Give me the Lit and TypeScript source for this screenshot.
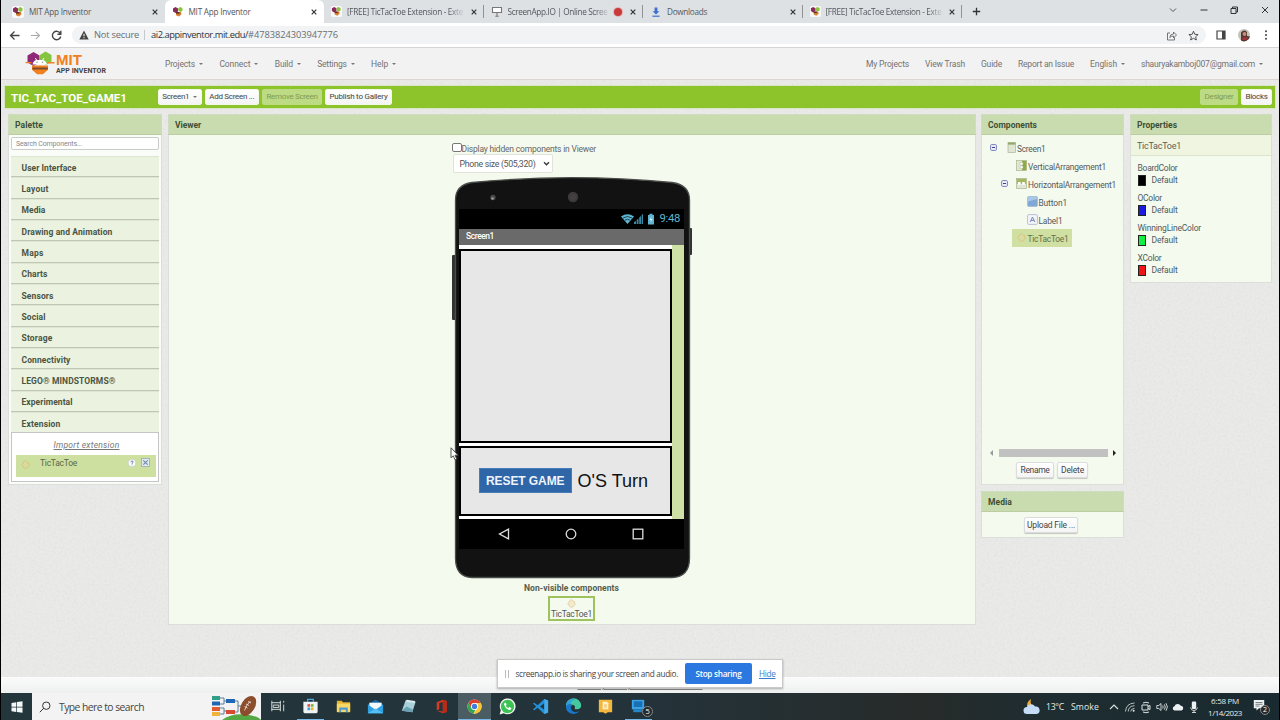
import { LitElement, html, css, nothing } from "lit";
import { customElement, property } from "lit/decorators.js";

/* A run of text set to an exact width by adjusting its tracking. */
@customElement("fit-text")
class FitText extends LitElement {
  @property({ type: Number }) w = 0;
  static styles = css`
    :host { display: inline-block; white-space: pre; flex: none; }
  `;
  firstUpdated() {
    const n = (this.textContent || "").length;
    const natural = this.getBoundingClientRect().width;
    this.style.letterSpacing = (this.w - natural) / Math.max(1, n) + "px";
    this.style.width = this.w + "px";
  }
  render() { return html`<slot></slot>`; }
}

const t = (s: string, w: number, cls = "") => html`<fit-text class=${cls} .w=${w}>${s}</fit-text>`;

const beeIcon = html`<svg class="fav" viewBox="0 0 12 12">
  <rect width="12" height="12" rx="2" fill="#fff" opacity=".75"/>
  <path d="M1 2.5 3.5 1 6 2.5v3L3.5 7 1 5.5z" fill="#8b2a5b"/>
  <path d="M6.3 2 8.3 1l2.2 1.2v2.6L8.5 6 6.3 4.8z" fill="#8dc43f"/>
  <path d="M4 6.5 8.8 6l.7 2.2L7 10.6 4 9.3z" fill="#d97b2c"/>
  <path d="M4 6h3.5v1.6H4z" fill="#5c2d23"/></svg>`;
const screenIcon = html`<svg class="fav" viewBox="0 0 12 12"><path d="M1.5 1.5h9v5h-9zM6 6.5V10M4.3 10.3h3.4" fill="#fff" stroke="#777" stroke-width="1.1"/></svg>`;
const downIcon = html`<svg class="fav" viewBox="0 0 12 12"><path d="M4.6 1.5h2.8v3.7h2L6 8.6 2.6 5.2h2z" fill="#3c6fd0"/><path d="M2.4 9.6h7.2v1.2H2.4z" fill="#3c6fd0"/></svg>`;
const closeX = html`<svg class="close" viewBox="0 0 8 8"><path d="M1.7 1.7l4.6 4.6M6.3 1.7L1.7 6.3" stroke="#333" stroke-width="1.2"/></svg>`;

const tabs = [
  { icon: beeIcon, text: "MIT App Inventor", w: 62 },
  { icon: beeIcon, text: "MIT App Inventor", w: 62, active: true },
  { icon: beeIcon, text: "[FREE] TicTacToe Extension - Exte", w: 116, fade: true, tight: true },
  { icon: screenIcon, text: "ScreenApp.IO | Online Scree", w: 100, fade: true, rec: true },
  { icon: downIcon, text: "Downloads", w: 40 },
  { icon: beeIcon, text: "[FREE] TicTacToe Extension - Exte", w: 116, fade: true, tight: true },
];

const palette: [string, number][] = [
  ["User Interface", 55], ["Layout", 27], ["Media", 24], ["Drawing and Animation", 91], ["Maps", 22],
  ["Charts", 26], ["Sensors", 32], ["Social", 24], ["Storage", 31], ["Connectivity", 49],
  ["LEGO® MINDSTORMS®", 94], ["Experimental", 51], ["Extension", 39],
];

const minus = html`<svg class="minus" viewBox="0 0 7 7"><rect x=".6" y=".6" width="5.8" height="5.8" rx="1" fill="#eef0fb" stroke="#7a80b8"/><path d="M2 3.5h3" stroke="#3b4296"/></svg>`;
const icScreen = html`<svg class="ti" viewBox="0 0 11 11"><rect x="2" y=".6" width="7.4" height="9.8" fill="#dfe5d3" stroke="#a9b598" stroke-width=".7"/><rect x="2" y=".6" width="7.4" height="2" fill="#93a86a"/></svg>`;
const icVert = html`<svg class="ti" viewBox="0 0 11 11"><rect x=".5" y=".5" width="10" height="10" fill="#dfe6d6" stroke="#a9b58f" stroke-width=".7"/><rect x="6" y=".8" width="4.3" height="9.4" fill="#8fa848"/><path d="M4 2.5h3v2.4H4zM4 6h3v2.4H4z" fill="#fff" stroke="#9db07a" stroke-width=".4"/></svg>`;
const icHorz = html`<svg class="ti" viewBox="0 0 11 11"><rect x=".5" y=".5" width="10" height="10" fill="#dfe6d6" stroke="#a9b58f" stroke-width=".7"/><rect x=".8" y=".8" width="9.4" height="5" fill="#a3b763"/><path d="M2 4h2.600v2.800H2zM6.200 4h2.600v2.800H6.200z" fill="#fff"/></svg>`;
const icButton = html`<svg class="ti" viewBox="0 0 11 11"><rect x=".6" y=".6" width="9.8" height="9.8" rx=".8" fill="#7fa8d6" stroke="#a2b8d2" stroke-width=".8"/><path d="M1 1h9v2L1 5.500z" fill="#a9c8e8"/></svg>`;
const icLabel = html`<svg class="ti" viewBox="0 0 11 11"><rect x=".6" y=".6" width="9.8" height="9.8" rx="1" fill="#f3f5fb" stroke="#aab4cc" stroke-width=".8"/><path d="M3.2 8 5.500 3 7.800 8M4 6.400h3" fill="none" stroke="#7a86b4" stroke-width="1"/></svg>`;
const icExt = html`<svg class="ti" viewBox="0 0 11 11"><path d="M5.500 1.500 7 3l1.500.5-.2 1.500L9.500 6 8 7.300 7.500 8.500 5.500 9.500 3.500 8.300 3 7 1.500 5.700 3 4.500l.3-1.400z" fill="#e5d79a" fill-opacity=".4" stroke="#dca862" stroke-opacity=".55" stroke-width=".8"/></svg>`;

const props = [
  { n: "BoardColor", w: 40, c: "#000" }, { n: "OColor", w: 24.5, c: "#1c1ce0" },
  { n: "WinningLineColor", w: 63.5, c: "#10f040" }, { n: "XColor", w: 24, c: "#f01414" },
];

const dot = html`<i class="caret"></i>`;

const apps = [
  { svg: html`<svg viewBox="0 0 20 20"><path d="M4 4v11M13 4v11M4 6h9M4 13h9M16.500 4v2M16.500 8v7" stroke="#d8dddd" fill="none"/><path d="M5.500 8.500h6v2.500h-6z" fill="none" stroke="#d8dddd"/></svg>` },
  { svg: html`<svg viewBox="0 0 20 20"><path d="M7 5V2.500h6V5" fill="none" stroke="#4ba8e0" stroke-width="1.300"/><path d="M2.500 5h15v10.500q0 1.500-1.500 1.500H4q-1.500 0-1.500-1.500z" fill="#eef3f6"/><path d="M6.800 7.500h2.800v2.800H6.800z" fill="#e0533a"/><path d="M10.400 7.500h2.800v2.800h-2.800z" fill="#7cb83e"/><path d="M6.800 11.100h2.800v2.800H6.800z" fill="#37a0e0"/><path d="M10.400 11.100h2.800v2.800h-2.800z" fill="#f1b420"/></svg>`, open: true },
  { svg: html`<svg viewBox="0 0 20 20"><path d="M3 4h5l1.500 1.500H17V15H3z" fill="#e8b330"/><path d="M3 7h14v9H3z" fill="#f8d765"/><path d="M5.500 11h9v5h-2v-2.500h-5V16h-2z" fill="#4f9bd5"/></svg>` },
  { svg: html`<svg viewBox="0 0 20 20"><path d="M2 8 10 2.500 18 8v9H2z" fill="#1367a8"/><path d="M3.500 6h13v7h-13z" fill="#f4f8fa"/><path d="M2 8l8 5.500L18 8v9H2z" fill="#2ea0e4"/><path d="M2 17l8-5 8 5z" fill="#57bff2"/></svg>` },
  { svg: html`<svg viewBox="0 0 20 20"><path d="M7 3.500l10.500 1.500L14 16 3 14.500z" fill="#a9cfda"/><path d="M8 3l9 1.300-.6 2L7.400 5z" fill="#dcebef"/><path d="M3 14.500 14 16l.8-2.500L8 10z" fill="#6aa2b3"/></svg>` },
  { svg: html`<svg viewBox="0 0 20 20"><path d="M5 5.500 11.500 3l4 1.200v11.600l-4 1.200L5 14.600l6.300.7V5.300L7.700 6.200v6.600L5 14z" fill="#d93a20"/><path d="M11.500 3l4 1.200v11.600l-4 1.200z" fill="#b72918"/></svg>` },
  { svg: html`<svg viewBox="0 0 20 20"><circle cx="10" cy="10" r="7.500" fill="#e8e8e8"/><path d="M3.500 6.300A7.500 7.500 0 0 1 16.500 6.300H10A3.700 3.700 0 0 0 6.700 11.800z" fill="#df4130"/><path d="M3.500 6.300 6.800 11.900A3.700 3.700 0 0 0 10.800 13.600L9 17.400A7.500 7.500 0 0 1 3.500 6.300z" fill="#36a550"/><path d="M16.500 6.300A7.500 7.500 0 0 1 9 17.400l4.300-5.600A3.700 3.700 0 0 0 12 6.300z" fill="#f8c62e"/><circle cx="10" cy="10" r="3.600" fill="#fff"/><circle cx="10" cy="10" r="2.800" fill="#3f7de0"/></svg>`, open: true, active: true },
  { svg: html`<svg viewBox="0 0 20 20"><path d="M1.700 18.300 3 14A8.300 8.300 0 1 1 6 17z" fill="#f4f8f4"/><circle cx="10" cy="10" r="7" fill="#3dc254"/><path d="M7.200 6q-1.200.8-.7 2.500.9 3.500 4.600 5 2 .6 2.700-.9l.1-1-1.900-1-1.200 1.100Q8.900 11 8.300 9.300L9 8.200 8.300 6z" fill="#fff"/></svg>` },
  { svg: html`<svg viewBox="0 0 20 20"><path d="M14 2l4 1.800v12.400L14 18 7 11.300 3.400 14 2 13.200l3.500-3.200L2 6.800 3.400 6 7 8.700zM14 6.500 9.500 10l4.500 3.500z" fill="#2391d9" fill-rule="evenodd"/><path d="M14 2l4 1.800v12.400L14 18z" fill="#45a9ea"/></svg>` },
  { svg: html`<svg viewBox="0 0 20 20"><path d="M2 9.500A8 8 0 0 1 18 9q0 4-4.500 4-3 0-2-2 .7-1.500-1.500-2.500-4-1.500-8 1z" fill="#45c9a0"/><path d="M2 9.500A8 8 0 0 1 12 2.300Q6 4 7.600 7 3.600 7.500 2 9.500z" fill="#2f9fe0"/><path d="M2 10Q4 6 9 8.500 5.500 11 8.500 14.500q3 2.800 7.800.3A8 8 0 0 1 2 10z" fill="#1978cc"/></svg>` },
  { svg: html`<svg viewBox="0 0 20 20"><path d="M3 3h14v13h-4.500L10 17.500 7.500 16H3z" fill="#f4b63c"/><path d="M7 5h4.500L13 6.500V13H7z" fill="#fff1c9"/><path d="M8.500 8.500h3M8.500 10.500h3" stroke="#e1a22f" stroke-width=".8"/></svg>` },
  { svg: html`<svg viewBox="0 0 20 20"><path d="M3 3h13v10H3z" fill="#3ba3e4"/><path d="M5 4.500h9v6H5z" fill="#1970b4"/><path d="M4.500 13h9v3h-9z" fill="#2487cc"/></svg>`, open: true, badge: "5" },
];

@customElement("app-root")
class AppRoot extends LitElement {
  static styles = css`
    :host { display: block; }
    * { box-sizing: border-box; }
    svg { display: block; flex: none; overflow: visible; }
    .root { position: relative; width: 1280px; height: 720px; overflow: hidden; background: #eaeae9; border-left: 1px solid #000; border-right: 1px solid #000; display: flex; flex-direction: column; font: 8.500px/12px Roboto, sans-serif; color: #555; }
    .grain { position: absolute; left: 0; top: 80px; width: 1278px; height: 598px; }
    .tabs { height: 23px; background: #dde1e4; display: flex; padding-left: 4px; flex: none; font: 8.2px/12px "Open Sans", sans-serif; color: #54585c; position: relative; }
    .tab { width: 159.500px; height: 23px; display: flex; align-items: center; padding: 0 6px 0 7px; position: relative; }
    .tab.sep::after { content: ""; position: absolute; right: 0; top: 5px; height: 13px; width: 1px; background: #8f9396; }
    .tab.active { background: #fff; border-radius: 6px 6px 0 0; }
    .fav { width: 12px; height: 12px; margin-right: 5px; }
    .tight .fav { width: 11px; height: 11px; }
    .fade { -webkit-mask-image: linear-gradient(90deg, #000 88%, transparent 102%); }
    .close { width: 8px; height: 8px; margin-left: auto; }
    .rec { width: 8px; height: 8px; border-radius: 50%; background: #c93a3a; box-shadow: 0 0 0 1px #e4b2b2; margin-left: 6px; }
    .plus { width: 9px; height: 9px; margin: 7px 0 0 10px; }
    .winctl { margin-left: auto; height: 19px; width: 121px; padding-right: 9px; padding-left: 10px; display: flex; align-items: center; justify-content: space-between; }
    .winctl svg { width: 10px; height: 10px; }
    .toolbar { height: 24px; flex: none; background: #fff; display: flex; align-items: center; padding-left: 8px; position: relative; }
    .navi { width: 11px; height: 11px; margin-right: 10px; }
    .omni { width: 1134px; height: 18px; border-radius: 9px; background: #f1f3f4; display: flex; align-items: center; padding: 0 7px; font: 9.300px/14px "Open Sans", sans-serif; color: #6a6e72; }
    .omni .dark { color: #2f3337; }
    .warn { width: 10px; height: 10px; margin-right: 5px; }
    .bar { width: 1px; height: 10px; background: #c6c9cc; margin: 0 6px 0 5px; }
    .omr { margin-left: auto; display: flex; gap: 11px; }
    .omr svg { width: 11px; height: 11px; }
    .tr { display: flex; align-items: center; flex: 1; padding: 0 7px 0 9px; justify-content: space-between; }
    .tr svg { width: 12px; height: 12px; }
    .head { height: 33px; flex: none; background: #f2f2f2; border-top: 1px solid #d4d4d4; border-bottom: 1px solid #dcd6d2; display: flex; align-items: center; position: relative; color: #727272; }
    .logo { display: flex; margin-left: 24px; width: 140px; align-items: center; }
    .logo svg { width: 30px; height: 24px; margin-top: -2px; }
    .lt { margin-left: 1px; display: flex; flex-direction: column; }
    .mit { font: bold 15px/12px "Liberation Sans", sans-serif; color: #f08020; margin-top: 1px; }
    .ai { font: bold 7px/8px Roboto, sans-serif; color: #444; margin-top: 1px; }
    .menu { display: flex; align-items: center; }
    .menu .m { display: flex; align-items: center; }
    .left { gap: 16.400px; }
    .right { gap: 16px; margin-left: auto; margin-right: 16px; }
    .caret { display: inline-block; border: 2px solid transparent; border-top-color: #777; border-bottom: 0; margin-left: 4px; flex: none; }
    .green { height: 22px; flex: none; margin: 6px 4px 0 4px; background: #8dc42b; display: flex; align-items: center; padding-left: 6px; position: relative; outline: 1px solid rgba(205,229,170,.6); }
    .title { font: bold 11.500px/14px Roboto, sans-serif; color: #fff; margin-top: 2px; margin-right: 31px; }
    .btn { height: 16px; background: linear-gradient(#fff, #f4f4f4); border-radius: 2px; display: flex; align-items: center; justify-content: center; font-size: 8px; color: #444; border: 1px solid #e2e8da; margin-right: 3px; flex: none; }
    .green .btn { border-color: #f3f8e8; }
    .green .btn.off { background: #bddb84; color: #7f9c52; border-color: #bddb84; }
    .w43 { width: 43.500px; } .w55 { width: 54.500px; } .w60 { width: 60px; } .w67 { width: 67px; } .w38 { width: 38px; } .w31 { width: 31px; }
    .grow { flex: 1; }
    .main { flex: 1; display: flex; align-items: flex-start; padding: 6px 0 0 7px; position: relative; }
    .panel { background: #f4faee; border: 1px solid #dcdedc; border-top: 0; flex: none; }
    .ph { height: 21px; margin: 0 -1px; background: #c9dcb0; border: 1px solid #cfdcc0; border-bottom-color: #bccda4; padding: 5px 6px 0; font-weight: bold; color: #3f4f35; line-height: 10px; }
    .pal { width: 154px; height: 371px; margin-right: 6px; }
    .pal .in { padding: 2px 2px 0; background: #fafcf8; height: 349px; }
    .search { height: 13px; border: 1px solid #c9cdc9; border-radius: 2px; background: #fff; display: flex; align-items: center; padding-left: 4px; font-size: 7px; color: #888; margin-bottom: 6px; }
    .cat { height: 21.350px; background: #ebf2e0; border-top: 1px solid #dde6d0; border-bottom: 1px solid #bfc6b8; padding: 4.500px 0 0 10.500px; font-weight: bold; color: #4a5544; line-height: 12px; }
    .ext { height: 50px; border: 1px solid #c5c5c8; background: #fff; padding: 5.500px 3px 0 5px; display: flex; flex-direction: column; align-items: center; margin-top: -1px; }
    .imp { font-style: italic; color: #777; margin-left: 1px; }
    .imp fit-text, .hide fit-text, .foot fit-text { text-decoration: underline; }
    .exti { margin-top: 4px; height: 22px; width: 140px; background: #cde09f; display: flex; align-items: flex-start; padding: 2px 6px 0 4px; color: #5b6848; }
    .exti .ti { margin-top: 2px; }
    .exti fit-text { margin-left: 9px; }
    .qi { width: 8px; height: 8px; margin: 2px 5px 0 auto; } .xi { width: 9px; height: 9px; margin-top: 1.500px; }
    .view { width: 808px; height: 511px; margin-right: 5px; }
    .vin { padding: 8px 0 0 283px; }
    .chk { display: flex; height: 12px; align-items: center; color: #666; }
    .cb { width: 9.500px; height: 9.500px; border: 1px solid #777; border-radius: 2px; background: #fff; margin: -3px 0 0 0; }
    .sel { width: 100px; height: 19px; border: 1px solid #dfe3d8; border-radius: 2px; background: #fff; margin: -1px 0 0 .5px; display: flex; align-items: center; padding: 0 2px 0 6px; justify-content: space-between; font-size: 8.800px; color: #555; }
    .sel svg { width: 7px; height: 7px; }
    .phone { position: relative; width: 240px; height: 401px; margin-top: 4px; padding: 32px 0 0 7px; }
    .shell { position: absolute; left: 0; top: 0; width: 240px; height: 401px; }
    .scr { position: relative; width: 225px; }
    .stat { height: 20px; background: #000; display: flex; justify-content: flex-end; align-items: center; padding-right: 4px; color: #5fb4d2; font-size: 11.300px; }
    .stat svg { width: 35px; height: 12px; margin-right: 4px; }
    .stitle { height: 16px; background: #6a6a6a; color: #fff; padding: 1.500px 0 0 7px; line-height: 11px; font-weight: 500; }
    .sbody { height: 274px; background: #cfe0a6; display: flex; }
    .scol { width: 213px; background: #fff; padding-top: 3.500px; display: flex; flex-direction: column; gap: 3px; }
    .box { border: 2px solid #000; background: #e7e7e7; height: 194.500px; }
    .box.b2 { height: 70px; display: flex; align-items: center; padding: 0 0 0 17.500px; font-family: "Liberation Sans", sans-serif; }
    .reset { width: 93.500px; height: 25px; background: #2f66a8; color: #eef4fa; font-weight: bold; font-size: 12px; display: flex; align-items: center; justify-content: center; margin-right: 5.500px; margin-top: -1px; border: 1px solid #477cb8; }
    .turn { font-size: 18px; color: #111; line-height: 22px; }
    .nav { height: 30px; background: #000; display: flex; align-items: center; justify-content: space-between; padding: 0 40px 0 39px; }
    .nav svg { width: 12px; height: 12px; }
    .nonvis { width: 239px; display: flex; flex-direction: column; align-items: center; font-weight: bold; color: #55604f; padding-top: 4px; }
    .nv { width: 47px; height: 25px; margin-top: 2px; border: 2px solid #9ec25e; font-weight: normal; display: flex; flex-direction: column; align-items: center; color: #555; line-height: 10px; }
    .nv .ti { height: 11px; }
    .c3 { display: flex; flex-direction: column; gap: 6px; margin-right: 6px; }
    .comp { width: 143px; height: 371px; display: flex; flex-direction: column; }
    .tree { padding: 3.500px 0 0 8px; height: 313px; color: #55595c; flex: none; font-size: 8.400px; }
    .row { height: 18px; display: flex; align-items: center; }
    .row fit-text { margin-top: 2.500px; margin-left: 1px; }
    .row .ti { margin-top: -1px; }
    .minus { width: 7px; height: 7px; margin-right: 8px; margin-top: -1px; }
    .ti { width: 11px; height: 11px; }
    .l1 { padding-left: 26px; } .l1m { padding-left: 11px; } .l2 { padding-left: 36.500px; }
    .row0 .ti { margin-left: .5px; }
    .row0 fit-text { margin-left: .5px; }
    .selrow { margin-left: 21.500px; width: 60px; height: 18px; background: #cfe0a2; padding-left: 4px; color: #667048; }
    .selrow fit-text { margin-top: 2.500px; }
    .hs { display: flex; align-items: center; height: 9px; padding: 0 7px 0 8px; justify-content: space-between; flex: none; }
    .thumb { width: 109px; height: 8px; background: #c1c1c1; }
    .la { border: 3px solid transparent; border-right-color: #999; border-left: 0; } .ra { border: 3px solid transparent; border-left-color: #222; border-right: 0; }
    .btns { display: flex; justify-content: center; padding-top: 5px; }
    .btns .btn { border: 1px solid #dcdcdc; box-shadow: 0 1px 1px #c2c6be; font-size: 8.500px; }
    .comp .btns { padding-left: 2px; }
    .media { width: 143px; height: 47px; }
    .prop { width: 142px; height: 169px; }
    .sub { height: 21px; background: #eff5e0; border-bottom: 1px solid #dce5cc; padding: 5px 0 0 6px; color: #5b6156; font-size: 9px; }
    .pi { padding: 6px 0 0 6.500px; height: 30px; color: #4e5a60; }
    .pr { display: flex; align-items: center; gap: 6px; }
    .sw { width: 8px; height: 11px; border: 1px solid #222; margin-top: 1px; }
    .foot { height: 16px; flex: none; background: linear-gradient(#fbfbfb, #eef0f0); position: relative; text-align: center; color: #888; line-height: 16px; font-size: 8.500px; }
    .share { position: absolute; left: 496px; top: 659px; width: 286px; height: 29px; background: #fff; border: 1px solid #c9c9c9; box-shadow: 0 1px 2px rgba(0,0,0,.3); display: flex; align-items: center; padding-left: 7px; font: 8.200px/12px "Open Sans", sans-serif; color: #444; }
    .handle { width: 4px; height: 8px; border: 1px solid #bbb; border-width: 0 1px; margin-right: 6.500px; }
    .stop { margin: 0 7px 0 7px; width: 67px; height: 21px; background: #2b78e0; border-radius: 2px; color: #fff; font-weight: 600; display: flex; align-items: center; justify-content: center; }
    .hide { color: #3e7bc8; }
    .cursor { position: absolute; left: 449px; top: 447px; width: 9px; height: 14px; }
    .task { height: 27px; flex: none; background: linear-gradient(90deg, #22363c, #24333a 50%, #272b2a 72%, #1e2d31 82%, #192a30); position: relative; display: flex; color: #e6ebeb; font: 8.700px/12px "Open Sans", sans-serif; }
    .start { width: 31px; display: flex; align-items: center; justify-content: center; }
    .start svg { width: 12px; height: 12px; }
    .tsearch { width: 229px; background: #f3f3f3; color: #444; display: flex; align-items: center; padding-left: 7px; font-size: 10.300px; }
    .tsearch .mag { width: 12px; height: 12px; margin-right: 8px; }
    .art { width: 50px; height: 27px; margin-left: auto; }
    .app { width: 32.850px; height: 27px; display: flex; align-items: center; justify-content: center; position: relative; }
    .app svg { width: 19px; height: 19px; }
    .app.active { background: #4b5c62; }
    .app.open::after { content: ""; position: absolute; left: 3px; right: 3px; bottom: 0; height: 1.500px; background: #76b9e8; }
    .app.active::after { left: 0; right: 0; }
    .badge { position: absolute; right: 2px; bottom: 3px; width: 11px; height: 11px; border-radius: 50%; background: #26292b; border: 1px solid #888; color: #fff; font-size: 7.500px; line-height: 9px; text-align: center; }
    .tray { margin-left: auto; display: flex; align-items: center; padding-right: 8px; }
    .tray .wx { width: 17px; height: 17px; margin-right: 6px; }
    .tray .ic { width: 12px; height: 12px; margin-left: 4px; }
    .clock { display: flex; flex-direction: column; align-items: center; margin: 0 11px 0 8px; font-size: 8px; }
    .smoke { margin: 0 5px 0 7px; }
    .note { position: relative; width: 18px; height: 18px; }
    .note svg { width: 12px; height: 12px; margin-top: 1px; }
    .note .badge { right: 1px; bottom: 1px; width: 10px; height: 10px; line-height: 8px; font-size: 7px; }
  `;

  tab(x: any, i: number) {
    return html`<div class="tab ${x.active ? "active" : ""} ${x.tight ? "tight" : ""} ${i > 1 ? "sep" : ""}">
      ${x.icon}${t(x.text, x.w, x.fade ? "fade" : "")}${x.rec ? html`<i class="rec"></i>` : nothing}${closeX}</div>`;
  }

  menu(s: string, w: number, caret = true) {
    return html`<span class="m">${t(s, w)}${caret ? dot : nothing}</span>`;
  }

  render() {
    return html`<div class="root">
      <svg class="grain"><filter id="n" x="0" y="0" width="100%" height="100%"><feTurbulence type="fractalNoise" baseFrequency=".45" numOctaves="2" seed="4"/><feColorMatrix values="0 0 0 0 .45  0 0 0 0 .45  0 0 0 0 .45  .5 0 0 0 -.18"/></filter><rect width="1278" height="598" filter="url(#n)" opacity=".45"/></svg>
      <div class="tabs">
        ${tabs.map((x, i) => this.tab(x, i))}
        <svg class="plus" viewBox="0 0 9 9"><path d="M4.500.8v7.400M.8 4.500h7.400" stroke="#333" stroke-width="1.300"/></svg>
        <div class="winctl">
          <svg viewBox="0 0 10 10"><path d="M2 3.500 5 6.500 8 3.500" fill="none" stroke="#555"/></svg>
          <svg viewBox="0 0 10 10"><path d="M1.500 5h7" stroke="#333"/></svg>
          <svg viewBox="0 0 10 10"><path d="M2 3.500h5v5H2zM3.500 3.500V2h5v5H7" fill="none" stroke="#333"/></svg>
          <svg viewBox="0 0 10 10"><path d="M2 2l6 6M8 2 2 8" stroke="#333"/></svg>
        </div>
      </div>
      <div class="toolbar">
        <svg class="navi" viewBox="0 0 11 11"><path d="M10.500 5.500H1.500M5.500 1.500l-4 4 4 4" fill="none" stroke="#444" stroke-width="1.300"/></svg>
        <svg class="navi" viewBox="0 0 11 11"><path d="M1 5.500h8.500M5.800 1.800l3.700 3.700-3.700 3.700" fill="none" stroke="#aaa" stroke-width="1.100"/></svg>
        <svg class="navi" viewBox="0 0 11 11"><path d="M9.300 3.500A4.200 4.200 0 1 0 9.700 6.500M9.800.8v3.400H6.400" fill="none" stroke="#444" stroke-width="1.400"/></svg>
        <div class="omni">
          <svg class="warn" viewBox="0 0 10 10"><path d="M5 .6 9.700 9.400H.3z" fill="#444"/><path d="M5 3.800v2.600M5 7.200v1.100" stroke="#fff" stroke-width="1"/></svg>
          ${t("Not secure", 45)}<i class="bar"></i>${t("ai2.appinventor.mit.edu/", 97, "dark")}${t("#4783824303947776", 90)}
          <div class="omr">
            <svg viewBox="0 0 11 11"><path d="M4 3H1.500v7h7V7.500M3.800 7.500Q4 4 7.500 4V2l3 3-3 3V6Q5 6 3.800 7.500z" fill="none" stroke="#666" stroke-width=".9"/></svg>
            <svg viewBox="0 0 11 11"><path d="M5.500 1.200 6.800 4.300l3.300.3-2.500 2.200.8 3.200-2.900-1.700L2.600 10l.8-3.200L.9 4.600l3.300-.3z" fill="none" stroke="#444" stroke-width=".9"/></svg>
          </div>
        </div>
        <div class="tr">
          <svg viewBox="0 0 12 12"><path d="M2 2h8v8H2z" fill="none" stroke="#444" stroke-width="1.200"/><path d="M7 2h3v8H7z" fill="#444"/></svg>
          <svg viewBox="0 0 12 12"><circle cx="6" cy="6" r="6" fill="#c3c3bb"/><path d="M3 3.500Q6 0 9 3v4l3 .5A6 6 0 0 1 3 11.500z" fill="#543a34"/><circle cx="6.500" cy="5" r="1.900" fill="#c68e74"/><path d="M5 8l5 .5-1.500 2.500H4z" fill="#9c3439"/></svg>
          <svg viewBox="0 0 12 12"><circle cx="6" cy="2.300" r="1" fill="#444"/><circle cx="6" cy="6" r="1" fill="#444"/><circle cx="6" cy="9.700" r="1" fill="#444"/></svg>
        </div>
      </div>
      <div class="head">
        <div class="logo">
          <svg viewBox="0 0 29 24"><path d="M2 4.500 8 1l6 3.500v7L8 15l-6-3.500z" fill="#8e2877"/><path d="M14.500 4 20 .5 26 4v6.500L20.500 14l-6-3.500z" fill="#86c440"/><path d="M0 11h6v1.300H0zM22 11h7v1.500h-7z" fill="#f08020"/><path d="M9.800 7l1.500 2.300M18.500 7l-1.500 2.300" stroke="#fff"/><path d="M10.500 9h7q3.500 1 4 4.500H7Q7.500 10 10.500 9z" fill="#fff"/><circle cx="11.500" cy="11.300" r=".8" fill="#8aa"/><circle cx="17" cy="11.300" r=".8" fill="#8aa"/><path d="M6.500 14.500h16v4.200l-5 4.600h-6l-5-4.600z" fill="#f08020"/><path d="M7 16.500h15.300v2H7z" fill="#7a4a2a"/></svg>
          <div class="lt">${t("MIT", 26, "mit")}${t("APP INVENTOR", 50, "ai")}</div>
        </div>
        <div class="menu left">${this.menu("Projects", 30)}${this.menu("Connect", 31)}${this.menu("Build", 18)}${this.menu("Settings", 29.5)}${this.menu("Help", 17)}</div>
        <div class="menu right">${this.menu("My Projects", 43, false)}${this.menu("View Trash", 40, false)}${this.menu("Guide", 21, false)}${this.menu("Report an Issue", 56, false)}${this.menu("English", 27)}${this.menu("shauryakamboj007@gmail.com", 114)}</div>
      </div>
      <div class="green">
        <span class="title">${t("TIC_TAC_TOE_GAME1", 116)}</span>
        <div class="btn w43">${t("Screen1", 27)}${dot}</div>
        <div class="btn w55">${t("Add Screen ...", 45)}</div>
        <div class="btn w60 off">${t("Remove Screen", 51)}</div>
        <div class="btn w67">${t("Publish to Gallery", 58)}</div>
        <span class="grow"></span>
        <div class="btn w38 off">${t("Designer", 29)}</div>
        <div class="btn w31">${t("Blocks", 22)}</div>
      </div>
      <div class="main">
        <div class="panel pal"><div class="ph">${t("Palette", 28)}</div>
          <div class="in">
            <div class="search">${t("Search Components...", 66)}</div>
            ${palette.map(([s, w]) => html`<div class="cat">${t(s, w)}</div>`)}
            <div class="ext"><span class="imp">${t("Import extension", 66)}</span>
              <div class="exti">${icExt}${t("TicTacToe", 37)}
                <svg class="qi" viewBox="0 0 8 8"><circle cx="4" cy="4" r="3.800" fill="#fff" stroke="#aebdc8" stroke-width=".5"/><path d="M2.900 3.200Q3 2 4.100 2q1.100.1 1 1.100Q5 3.700 4 4.300v.6M4 5.500v.8" fill="none" stroke="#4d5878" stroke-width=".8"/></svg>
                <svg class="xi" viewBox="0 0 9 9"><rect x=".5" y=".5" width="8" height="8" fill="#dfe8f0" stroke="#8fa4b8" stroke-width=".7"/><path d="M2.300 2.300l4.400 4.400M6.700 2.300 2.300 6.700" stroke="#7388a8" stroke-width="1.100"/></svg>
              </div></div>
          </div></div>
        <div class="panel view"><div class="ph">${t("Viewer", 26)}</div>
          <div class="vin">
            <div class="chk"><i class="cb"></i>${t("Display hidden components in Viewer", 134.5)}</div>
            <div class="sel">${t("Phone size (505,320)", 76)}<svg viewBox="0 0 7 7"><path d="M1 2.200 3.500 4.800 6 2.200" fill="none" stroke="#333" stroke-width="1.300"/></svg></div>
            <div class="phone">
              <svg class="shell" viewBox="0 0 240 401"><rect x="0" y="78" width="4" height="65" rx="1" fill="#333"/><rect x="236" y="51" width="4" height="27" rx="1" fill="#333"/>
                <path d="M3.500 23Q3.500 8 20 5.500 70 .7 120 .7T220 5.500Q237.500 8 237.500 23V381Q237.500 400 220 400.500H20Q3.500 400 3.500 381z" fill="#111211" stroke="#4a4d4a" stroke-width="1.300"/>
                <circle cx="41" cy="20.500" r="2.700" fill="#484848"/><circle cx="40.500" cy="21.500" r="1.300" fill="#999"/><circle cx="121" cy="20" r="5.200" fill="#3b3b3b"/><circle cx="121" cy="20" r="3" fill="#444042"/></svg>
              <div class="scr">
                <div class="stat"><svg viewBox="0 0 35 12"><path d="M0 3.500Q6.500-1 13 3.500L6.500 11z" fill="#5fb4d2"/><path d="M2 5q4.500-3 9 0M4 7.200q2.500-1.800 5 0" stroke="#0b2733" fill="none" stroke-width=".8"/><path d="M13 11v-2l2-1v3zM15.700 11V7l1.800-1.500V11zM18.200 11V4.500L20 3v8zM20.600 11V2l1.400-1v10z" fill="#3f87a2"/><path d="M27 2h1.500V.8h3V2H33v9.500h-6z" fill="#5fb4d2"/><path d="M30.500 3.500 28.500 7h1.500l-.5 2.500 2-3.500H30z" fill="#e8f7ff"/></svg>${t("9:48", 20.5)}</div>
                <div class="stitle">${t("Screen1", 28)}</div>
                <div class="sbody"><div class="scol"><div class="box"></div><div class="box b2"><div class="reset">${t("RESET GAME", 78.5)}</div><span class="turn">${t("O'S Turn", 70.5)}</span></div></div></div>
                <div class="nav">
                  <svg viewBox="0 0 12 12"><path d="M10.500 1.200v9.600L1.500 6z" fill="none" stroke="#ddd" stroke-width="1.300"/></svg>
                  <svg viewBox="0 0 12 12"><circle cx="6" cy="6" r="4.800" fill="none" stroke="#ddd" stroke-width="1.300"/></svg>
                  <svg viewBox="0 0 12 12"><rect x="1.200" y="1.200" width="9.600" height="9.600" fill="none" stroke="#ddd" stroke-width="1.300"/></svg>
                </div>
              </div>
            </div>
            <div class="nonvis">${t("Non-visible components", 95)}<div class="nv">${icExt}${t("TicTacToe1", 41)}</div></div>
          </div></div>
        <div class="c3">
          <div class="panel comp"><div class="ph">${t("Components", 49)}</div>
            <div class="tree">
              <div class="row row0">${minus}${icScreen}${t("Screen1", 28.5)}</div>
              <div class="row l1">${icVert}${t("VerticalArrangement1", 78)}</div>
              <div class="row l1m">${minus}${icHorz}${t("HorizontalArrangement1", 88)}</div>
              <div class="row l2">${icButton}${t("Button1", 28.5)}</div>
              <div class="row l2">${icLabel}${t("Label1", 24)}</div>
              <div class="row selrow">${icExt}${t("TicTacToe1", 41)}</div>
            </div>
            <div class="hs"><i class="la"></i><i class="thumb"></i><i class="ra"></i></div>
            <div class="btns"><div class="btn w38">${t("Rename", 29)}</div><div class="btn w31">${t("Delete", 23)}</div></div>
          </div>
          <div class="panel media"><div class="ph">${t("Media", 24)}</div>
            <div class="btns"><div class="btn w55">${t("Upload File ...", 48)}</div></div></div>
        </div>
        <div class="panel prop"><div class="ph">${t("Properties", 40)}</div>
          <div class="sub">${t("TicTacToe1", 44)}</div>
          ${props.map((p) => html`<div class="pi">${t(p.n, p.w)}<div class="pr"><i class="sw" style="background:${p.c}"></i>${t("Default", 26)}</div></div>`)}
        </div>
      </div>
      <div class="foot">${t("Privacy Policy and Terms of Use", 125)}</div>
      <div class="task">
        <div class="start"><svg viewBox="0 0 12 12"><path d="M.5 2l4.800-.8v4.500H.5zM6 1.100l5.500-.9v5.500H6zM.5 6.400h4.800v4.500L.5 10.200zM6 6.400h5.500v5.400L6 11z" fill="#f4f7f7"/></svg></div>
        <div class="tsearch"><svg class="mag" viewBox="0 0 12 12"><circle cx="7.300" cy="4.700" r="3.700" fill="none" stroke="#333"/><path d="M4.700 7.300.8 11.200" stroke="#333"/></svg>${t("Type here to search", 85)}
          <svg class="art" viewBox="0 0 50 27"><path d="M9 5h4v6H9M9 15h4v6H9M24 8h3v11h-3M13 8h4M13 18h4M27 13h5" fill="none" stroke="#5a7f98"/><path d="M1 3h8v4H1z" fill="#2f9f87"/><path d="M1 8.500h8v4H1z" fill="#2166b4"/><path d="M1 14h8v4H1z" fill="#e35a2c"/><path d="M1 19h8v4H1z" fill="#f0b43c"/><path d="M15 6h9v4h-9z" fill="#2166b4"/><path d="M15 17h9v4h-9z" fill="#d94a32"/><path d="M11 27Q20 20 35 21.500 47 23 50 27z" fill="#55a844"/><ellipse cx="37" cy="13" rx="11" ry="6.800" transform="rotate(-58 37 13)" fill="#8b4d2c"/><path d="M33.500 17.500Q35 12 39.500 8M33.500 13.500l3 1.500M35 11l3 1.500M37 8.500l3 1.500" fill="none" stroke="#f2e8df" stroke-width=".8"/></svg></div>
        ${apps.map((a: any) => html`<div class="app ${a.open ? "open" : ""} ${a.active ? "active" : ""}">${a.svg}${a.badge ? html`<span class="badge">${a.badge}</span>` : nothing}</div>`)}
        <div class="tray">
          <svg class="wx" viewBox="0 0 17 17"><path d="M8 1Q6 8 13 9q-3 4-8 1Q2 5 8 1z" fill="#f1a93a"/><path d="M4 16a3.500 3.500 0 0 1 0-7 4.500 4.500 0 0 1 8-.5 3.800 3.800 0 0 1 1.500 7.500z" fill="#c5dcf7"/></svg>
          ${t("13°C", 18)}${t("Smoke", 28, "smoke")}
          <svg class="ic" viewBox="0 0 12 12"><path d="M2 8l4-4 4 4" fill="none" stroke="#dde3e3" stroke-width="1.100"/></svg>
          <svg class="ic" viewBox="0 0 12 12"><path d="M1.500 10.500Q2 2.500 10.500 2M4.200 10.500Q4.500 5 10.500 4.700M6.700 10.500Q7 7.500 10.500 7.400" fill="none" stroke="#b5bdbf"/><circle cx="9.600" cy="9.800" r="1" fill="#dde3e3"/></svg>
          <svg class="ic" viewBox="0 0 12 12"><path d="M2 4h6v5H2zM8 5.500l2-1v4l-2-1M3 2q3-1.500 6 0M3 11q3 1.500 6 0" fill="none" stroke="#dde3e3"/></svg>
          <svg class="ic" viewBox="0 0 12 12"><path d="M.8 4.500h2L5 2.500v7L2.800 7.500h-2zM6.700 4.500q1 1.500 0 3M8.300 3.300q2 2.700 0 5.400M10 2.200q2.800 3.800 0 7.600" fill="none" stroke="#dde3e3" stroke-width=".9"/></svg>
          <svg class="ic" viewBox="0 0 12 12"><path d="M2.500 9.500a2.200 2.200 0 0 1 0-4.300A3.500 3.500 0 0 1 8.800 4.800 2.400 2.400 0 0 1 9.500 9.500z" fill="#eef1f1"/></svg>
          <svg class="ic" viewBox="0 0 12 12"><rect x="3.800" y=".5" width="4.400" height="7.500" rx="1.200" fill="#eef1f1"/><path d="M2.500 6.500q.5 3 3.500 3t3.500-3M6 9.500v2M4 11.500h4" fill="none" stroke="#cdd2d2"/></svg>
          <div class="clock">${t("6:58 PM", 28)}${t("1/14/2023", 34)}</div>
          <div class="note"><svg viewBox="0 0 12 12"><path d="M.8 1h10.400v8.300H6L3.500 11.500V9.300H.8z" fill="#eef1f1"/><path d="M2.500 3.500h7M2.500 5.300h7M2.500 7.100h4" stroke="#5a6669" stroke-width=".8"/></svg><span class="badge">2</span></div>
        </div>
      </div>
      <div class="share"><i class="handle"></i>${t("screenapp.io is sharing your screen and audio.", 162.5)}<div class="stop">${t("Stop sharing", 46)}</div><span class="hide">${t("Hide", 16.5)}</span></div>
      <svg class="cursor" viewBox="0 0 9 14"><path d="M1 .8v10l2.300-2 1.700 4 1.700-.8L5 8.200h3z" fill="#fff" stroke="#444" stroke-width=".9"/></svg>
    </div>`;
  }
}
